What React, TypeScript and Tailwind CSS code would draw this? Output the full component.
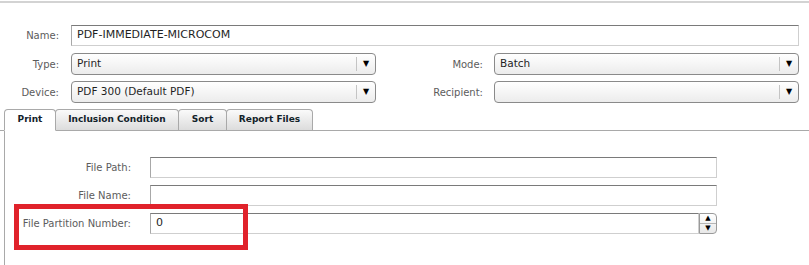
import React from "react";

const labelCls = "text-right text-[#5c5c5c] shrink-0";

function TextBox({ value, width }: { value?: string; width: string }) {
  return (
    <div
      className={`${width} h-[21px] flex items-center px-[5px] bg-white border border-t-[#7a7a7a] border-l-[#a8a8a8] border-r-[#cfcfcf] border-b-[#cfcfcf] text-[11px] text-[#1f1f1f]`}
    >
      {value}
    </div>
  );
}

function Select({ value }: { value?: string }) {
  return (
    <div className="w-[305px] h-[22px] flex items-center rounded-[4px] border border-[#8a8a8a] bg-gradient-to-b from-white to-[#ececec] text-[10.5px] text-[#1f1f1f]">
      <span className="flex-1 pl-[5px]">{value}</span>
      <span className="w-px h-[14px] bg-[#c4c4c4]" />
      <span className="w-[18px] flex justify-center text-[8px] text-black">▼</span>
    </div>
  );
}

function Tab({ label, width, active }: { label: string; width: string; active?: boolean }) {
  return (
    <div
      className={`${width} flex items-center justify-center rounded-t-[4px] border border-[#a9a9a9] font-bold text-[9px] text-[#122229] ${
        active
          ? "h-[22px] -mb-px border-b-white bg-white"
          : "h-[21px] -ml-px border-b-0 bg-gradient-to-b from-[#fafafa] to-[#dcdcdc]"
      }`}
    >
      {label}
    </div>
  );
}

export default function App() {
  return (
    <div className="relative w-[809px] h-[265px] overflow-hidden bg-white font-['DejaVu_Sans',sans-serif] text-[10px]">
      <div className="mt-px h-[2px] bg-[#d3d3d3]" />

      <div className="pt-[22px]">
        <div className="flex items-center">
          <div className={`${labelCls} w-[59px]`}>Name:</div>
          <div className="ml-[12px]">
            <TextBox value="PDF-IMMEDIATE-MICROCOM" width="w-[728px]" />
          </div>
        </div>

        <div className="mt-[7px] flex items-center">
          <div className={`${labelCls} w-[59px]`}>Type:</div>
          <div className="ml-[12px]">
            <Select value="Print" />
          </div>
          <div className={`${labelCls} w-[107px]`}>Mode:</div>
          <div className="ml-[11px]">
            <Select value="Batch" />
          </div>
        </div>

        <div className="mt-[6px] flex items-center">
          <div className={`${labelCls} w-[59px]`}>Device:</div>
          <div className="ml-[12px]">
            <Select value="PDF 300 (Default PDF)" />
          </div>
          <div className={`${labelCls} w-[107px]`}>Recipient:</div>
          <div className="ml-[11px]">
            <Select />
          </div>
        </div>
      </div>

      <div className="mt-[6px]">
        <div className="flex items-end pl-[4px] border-b border-[#a9a9a9]">
          <Tab label="Print" width="w-[52px]" active />
          <Tab label="Inclusion Condition" width="w-[124px]" />
          <Tab label="Sort" width="w-[49px]" />
          <Tab label="Report Files" width="w-[87px]" />
        </div>

        <div className="ml-[4px] h-[140px] border-l border-[#a9a9a9] pt-[26px]">
          <div className="flex items-center">
            <div className={`${labelCls} w-[126px]`}>File Path:</div>
            <div className="ml-[19px]">
              <TextBox width="w-[567px]" />
            </div>
          </div>
          <div className="mt-[7px] flex items-center">
            <div className={`${labelCls} w-[126px]`}>File Name:</div>
            <div className="ml-[19px]">
              <TextBox width="w-[567px]" />
            </div>
          </div>
          <div className="mt-[7px] flex items-center">
            <div className={`${labelCls} w-[126px]`}>File Partition Number:</div>
            <div className="ml-[19px] flex">
              <TextBox value="0" width="w-[549px]" />
              <div className="w-[18px] h-[21px] flex flex-col rounded-r-[4px] border border-[#9a9a9a] bg-gradient-to-b from-white to-[#e8e8e8] overflow-hidden">
                <div className="flex-1 flex items-center justify-center text-[7px] leading-none border-b border-[#b5b5b5]">▲</div>
                <div className="flex-1 flex items-center justify-center text-[7px] leading-none">▼</div>
              </div>
            </div>
          </div>
        </div>
      </div>

      <div className="absolute left-[14px] top-[204px] w-[234px] h-[46px] border-[5px] border-[#e0222b]" />
    </div>
  );
}
